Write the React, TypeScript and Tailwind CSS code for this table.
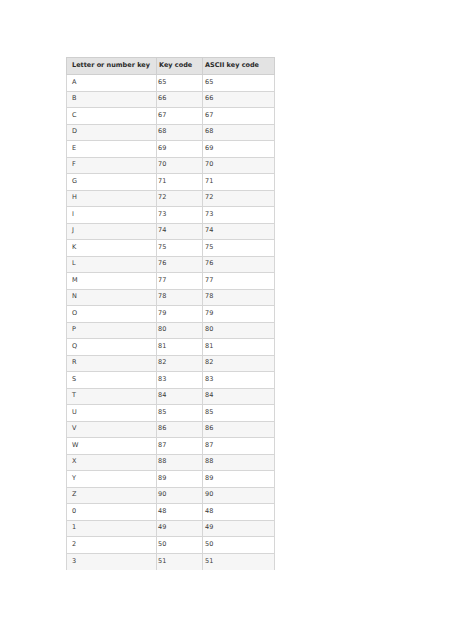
import React from "react";

const rows: [string, string, string][] = [
  ..."ABCDEFGHIJKLMNOPQRSTUVWXYZ".split("").map((c) => [c, String(c.charCodeAt(0)), String(c.charCodeAt(0))] as [string, string, string]),
  ["0", "48", "48"],
  ["1", "49", "49"],
  ["2", "50", "50"],
  ["3", "51", "51"],
];

export default function App() {
  return (
    <div className="w-[474px] h-[632px] bg-white pt-[57px] pl-[66px]" style={{ fontFamily: '"DejaVu Sans", Verdana, sans-serif' }}>
      <table className="border-collapse text-[6.5px] text-[#3a3a3a] w-[208px] table-fixed">
        <colgroup>
          <col className="w-[90px]" />
          <col className="w-[46px]" />
          <col className="w-[72px]" />
        </colgroup>
        <thead>
          <tr className="h-[17px] bg-[#e3e3e3]">
            <th className="border border-[#cfcfcf] text-left font-bold px-[5px] py-0 text-[#2a2a2a]">Letter or number key</th>
            <th className="border border-[#cfcfcf] text-left font-bold px-[2px] py-0 text-[#2a2a2a]">Key code</th>
            <th className="border border-[#cfcfcf] text-left font-bold px-[2px] py-0 text-[#2a2a2a]">ASCII key code</th>
          </tr>
        </thead>
        <tbody>
          {rows.map((r, i) => {
            const last = i === rows.length - 1;
            const cell = last
              ? "border border-b-0 border-[#d6d6d6] py-0"
              : "border border-[#d6d6d6] py-0";
            return (
              <tr key={i} className={`h-[16.5px] ${i % 2 === 1 ? "bg-[#f6f6f6]" : "bg-white"}`}>
                <td className={`${cell} px-[5px]`}>{r[0]}</td>
                <td className={`${cell} px-[1px]`}>{r[1]}</td>
                <td className={`${cell} px-[2px]`}>{r[2]}</td>
              </tr>
            );
          })}
        </tbody>
      </table>
    </div>
  );
}
